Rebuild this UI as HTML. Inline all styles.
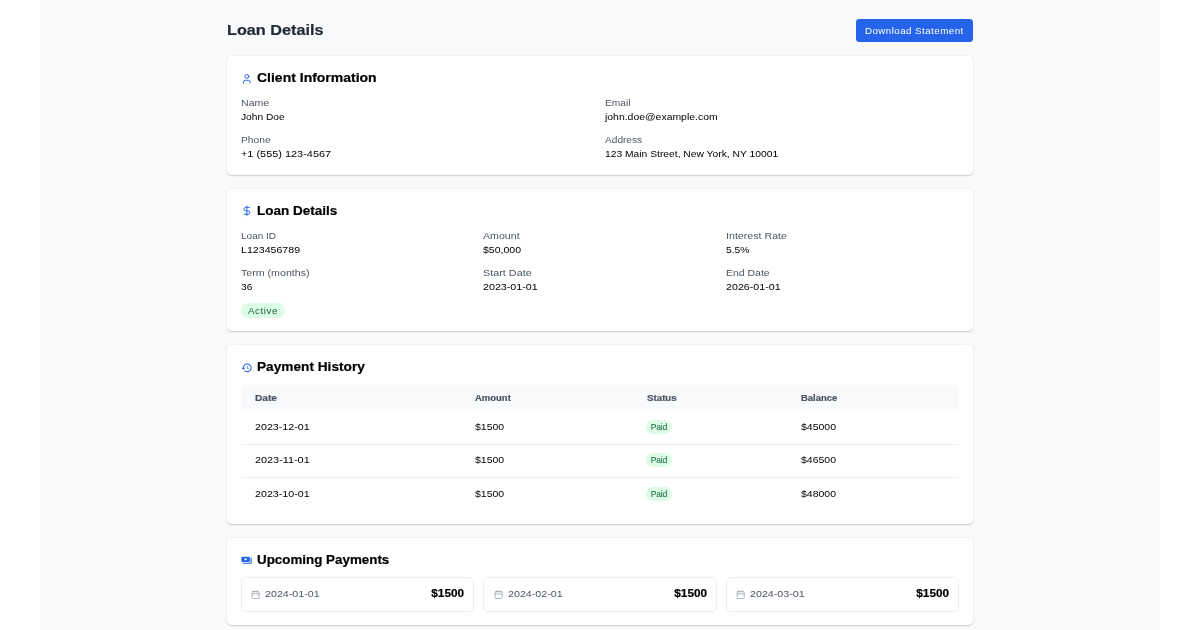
<!DOCTYPE html>
<html><head><meta charset="utf-8"><style>
*{margin:0;padding:0;box-sizing:border-box;}
html,body{width:1200px;height:630px;overflow:hidden;background:#fff;font-family:"Liberation Sans", sans-serif;color:#000;}
.cont{will-change:transform;}
.cont *{-webkit-text-stroke:0px currentColor;}
.h1,.ttl span,.th,.am{-webkit-text-stroke:0.2px currentColor;}
.outer{position:absolute;left:40px;top:0;width:1120px;height:630px;background:#f9fafb;}
.cont{position:absolute;left:227px;top:18.650px;width:746px;}
.hdr{position:relative;height:23.312px;}
.h1{position:absolute;left:0;top:2.331px;line-height:18.650px;font-weight:bold;color:#1f2937;white-space:nowrap;}
.btn{position:absolute;right:0;top:0;height:23.312px;line-height:23.312px;padding:0 9.325px;background:#2563eb;color:#fff;border-radius:3.497px;white-space:nowrap;}
.card{position:relative;background:#fff;border-radius:4.662px;box-shadow:0 0.7px 2.4px 0 rgba(0,0,0,.10),0 0.6px 1.2px -0.4px rgba(0,0,0,.10);padding:13.987px;margin-top:13.987px;}
.ttl{display:flex;align-items:center;height:16.318px;margin-bottom:9.325px;}
.ttl svg{margin-right:4.662px;flex:none;display:block;}
.ttl span{font-weight:bold;line-height:16.318px;white-space:nowrap;}
.g2{display:grid;grid-template-columns:1fr 1fr;gap:9.325px;}
.g3{display:grid;grid-template-columns:1fr 1fr 1fr;gap:9.325px;}
.lab{color:#4b5563;line-height:13.987px;white-space:nowrap;}
.val{line-height:13.987px;white-space:nowrap;}
.bdg{position:relative;height:13.987px;margin-top:9.325px;}
.active{display:block;position:absolute;left:0;top:-0.758px;height:15.502px;line-height:15.502px;padding:0 6.994px;background:#dcfce7;color:#166534;border-radius:999px;white-space:nowrap;}
.tbl{position:relative;}
.thr{position:relative;height:26.226px;background:#f9fafb;border-bottom:0.583px solid #f9fafb;}
.th{position:absolute;top:0.75px;line-height:25.643px;font-weight:bold;color:#4b5563;white-space:nowrap;}
.tr{position:relative;height:32.637px;}
.tr.b{border-top:1px solid #eceef1;height:33.220px;}
.td{position:absolute;bottom:0;line-height:32.637px;height:32.637px;white-space:nowrap;}
.paid{display:inline-block;vertical-align:middle;height:13.987px;line-height:calc(13.987px + 1.6px);margin-left:-1px;padding:0 4.662px;background:#dcfce7;color:#166534;border-radius:999px;position:relative;top:-0.583px;}
.box{border:1px solid #eceef1;border-radius:4.662px;height:calc(33.802px + 0.8px);padding:0 9.325px;display:flex;align-items:center;justify-content:space-between;}
.bl{display:flex;align-items:center;}
.bl svg{margin-right:4.662px;display:block;}
.dt{color:#4b5563;line-height:13.987px;white-space:nowrap;}
.am{font-weight:bold;line-height:13.987px;white-space:nowrap;margin-right:-0.4px;}
</style></head><body>
<div class="outer"></div>
<div class="cont">
 <div class="hdr">
  <div class="h1" style="font-size:14.407px;transform:scaleX(1.1276);transform-origin:left center;">Loan Details</div>
  <div class="btn" style="font-size:9.791px;letter-spacing:0.442px;">Download Statement</div>
 </div>
 <div class="card">
  <div class="ttl"><svg width="11.66" height="11.66" viewBox="0 0 24 24" fill="none" stroke="#2563eb" stroke-width="2" stroke-linecap="round" stroke-linejoin="round"><path d="M19 21v-2a4 4 0 0 0-4-4H9a4 4 0 0 0-4 4v2"/><circle cx="12" cy="7" r="4"/></svg><span style="font-size:12.006px;transform:scaleX(1.1656);transform-origin:left center;">Client Information</span></div>
  <div class="g2">
   <div><div class="lab" style="font-size:9.791px;transform:scaleX(1.0816);transform-origin:left center;">Name</div><div class="val" style="font-size:9.791px;transform:scaleX(1.0397);transform-origin:left center;">John Doe</div></div>
   <div><div class="lab" style="font-size:9.791px;transform:scaleX(1.0397);transform-origin:left center;">Email</div><div class="val" style="font-size:9.791px;transform:scaleX(1.0665);transform-origin:left center;">john.doe@example.com</div></div>
   <div><div class="lab" style="font-size:9.791px;transform:scaleX(1.0458);transform-origin:left center;">Phone</div><div class="val" style="font-size:9.791px;transform:scaleX(1.1156);transform-origin:left center;">+1 (555) 123-4567</div></div>
   <div><div class="lab" style="font-size:9.791px;transform:scaleX(1.0345);transform-origin:left center;">Address</div><div class="val" style="font-size:9.791px;transform:scaleX(1.0519);transform-origin:left center;">123 Main Street, New York, NY 10001</div></div>
  </div>
 </div>
 <div class="card">
  <div class="ttl"><svg width="11.66" height="11.66" viewBox="0 0 24 24" fill="none" stroke="#2563eb" stroke-width="2" stroke-linecap="round" stroke-linejoin="round"><line x1="12" y1="2" x2="12" y2="22"/><path d="M17 5H9.5a3.5 3.5 0 0 0 0 7h5a3.5 3.5 0 0 1 0 7H6"/></svg><span style="font-size:12.006px;transform:scaleX(1.1240);transform-origin:left center;">Loan Details</span></div>
  <div class="g3">
   <div><div class="lab" style="font-size:9.791px;transform:scaleX(1.0246);transform-origin:left center;">Loan ID</div><div class="val" style="font-size:9.791px;transform:scaleX(1.0858);transform-origin:left center;">L123456789</div></div>
   <div><div class="lab" style="font-size:9.791px;transform:scaleX(1.0869);transform-origin:left center;">Amount</div><div class="val" style="font-size:9.791px;transform:scaleX(1.0743);transform-origin:left center;">$50,000</div></div>
   <div><div class="lab" style="font-size:9.791px;transform:scaleX(1.0884);transform-origin:left center;">Interest Rate</div><div class="val" style="font-size:9.791px;transform:scaleX(1.0537);transform-origin:left center;">5.5%</div></div>
   <div><div class="lab" style="font-size:9.791px;transform:scaleX(1.0869);transform-origin:left center;">Term (months)</div><div class="val" style="font-size:9.791px;transform:scaleX(1.0424);transform-origin:left center;">36</div></div>
   <div><div class="lab" style="font-size:9.791px;transform:scaleX(1.1065);transform-origin:left center;">Start Date</div><div class="val" style="font-size:9.791px;transform:scaleX(1.0928);transform-origin:left center;">2023-01-01</div></div>
   <div><div class="lab" style="font-size:9.791px;transform:scaleX(1.0705);transform-origin:left center;">End Date</div><div class="val" style="font-size:9.791px;transform:scaleX(1.0928);transform-origin:left center;">2026-01-01</div></div>
  </div>
  <div class="bdg"><span class="active" style="font-size:9.791px;letter-spacing:0.576px;">Active</span></div>
 </div>
 <div class="card">
  <div class="ttl"><svg width="11.66" height="11.66" viewBox="0 0 24 24" fill="#2563eb" style="position:relative;top:0.6px"><path d="M13 3a9 9 0 0 0-9 9H1l3.89 3.89.07.14L9 12H6c0-3.87 3.13-7 7-7s7 3.13 7 7-3.13 7-7 7c-1.93 0-3.68-.79-4.94-2.06l-1.42 1.42A8.954 8.954 0 0 0 13 21a9 9 0 0 0 0-18zm-1 5v5l4.28 2.54.72-1.21-3.5-2.08V8H12z"/></svg><span style="font-size:12.006px;transform:scaleX(1.1386);transform-origin:left center;">Payment History</span></div>
  <div class="tbl">
   <div class="thr"><div class="th" style="left:14.000px;font-size:8.649px;transform:scaleX(1.1717);transform-origin:left center;">Date</div><div class="th" style="left:234.000px;font-size:8.649px;transform:scaleX(1.0998);transform-origin:left center;">Amount</div><div class="th" style="left:406.000px;font-size:8.649px;transform:scaleX(1.1270);transform-origin:left center;">Status</div><div class="th" style="left:560.000px;font-size:8.649px;transform:scaleX(1.0997);transform-origin:left center;">Balance</div></div><div class="tr"><div class="td" style="left:14.000px;font-size:9.791px;transform:scaleX(1.0928);transform-origin:left center;">2023-12-01</div><div class="td" style="left:234.000px;font-size:9.791px;transform:scaleX(1.0699);transform-origin:left center;">$1500</div><div class="td" style="left:406.000px;"><span class="paid" style="font-size:8.567px;letter-spacing:-0.187px;">Paid</span></div><div class="td" style="left:560.000px;font-size:9.791px;transform:scaleX(1.0730);transform-origin:left center;">$45000</div></div><div class="tr b"><div class="td" style="left:14.000px;font-size:9.791px;transform:scaleX(1.1090);transform-origin:left center;">2023-11-01</div><div class="td" style="left:234.000px;font-size:9.791px;transform:scaleX(1.0699);transform-origin:left center;">$1500</div><div class="td" style="left:406.000px;"><span class="paid" style="font-size:8.567px;letter-spacing:-0.187px;">Paid</span></div><div class="td" style="left:560.000px;font-size:9.791px;transform:scaleX(1.0730);transform-origin:left center;">$46500</div></div><div class="tr b"><div class="td" style="left:14.000px;font-size:9.791px;transform:scaleX(1.0928);transform-origin:left center;">2023-10-01</div><div class="td" style="left:234.000px;font-size:9.791px;transform:scaleX(1.0699);transform-origin:left center;">$1500</div><div class="td" style="left:406.000px;"><span class="paid" style="font-size:8.567px;letter-spacing:-0.187px;">Paid</span></div><div class="td" style="left:560.000px;font-size:9.791px;transform:scaleX(1.0730);transform-origin:left center;">$48000</div></div>
  </div>
 </div>
 <div class="card">
  <div class="ttl"><svg width="11.66" height="11.66" viewBox="0 0 20 20" style="position:relative;top:0.9px"><rect x="0.6" y="2.8" width="14.6" height="9" rx="1.4" fill="#2563eb"/><ellipse cx="7.9" cy="7.3" rx="2" ry="1.7" fill="#fff"/><path d="M3.4 14.1H17.4V5.2" fill="none" stroke="#2563eb" stroke-width="1.9" stroke-linecap="round" stroke-linejoin="round"/></svg><span style="font-size:12.006px;transform:scaleX(1.1146);transform-origin:left center;">Upcoming Payments</span></div>
  <div class="g3" style="margin-top:-0.8px"><div class="box"><div class="bl"><svg width="9.33" height="9.33" viewBox="0 0 24 24" fill="none" stroke="#9ca3af" stroke-width="2" stroke-linecap="round" stroke-linejoin="round"><rect x="3" y="4" width="18" height="18" rx="2"/><line x1="16" y1="2" x2="16" y2="6"/><line x1="8" y1="2" x2="8" y2="6"/><line x1="3" y1="10" x2="21" y2="10"/></svg><span class="dt" style="font-size:9.791px;transform:scaleX(1.0928);transform-origin:left center;">2024-01-01</span></div><span class="am" style="font-size:10.444px;transform:scaleX(1.1266);transform-origin:right center;">$1500</span></div><div class="box"><div class="bl"><svg width="9.33" height="9.33" viewBox="0 0 24 24" fill="none" stroke="#9ca3af" stroke-width="2" stroke-linecap="round" stroke-linejoin="round"><rect x="3" y="4" width="18" height="18" rx="2"/><line x1="16" y1="2" x2="16" y2="6"/><line x1="8" y1="2" x2="8" y2="6"/><line x1="3" y1="10" x2="21" y2="10"/></svg><span class="dt" style="font-size:9.791px;transform:scaleX(1.0928);transform-origin:left center;">2024-02-01</span></div><span class="am" style="font-size:10.444px;transform:scaleX(1.1266);transform-origin:right center;">$1500</span></div><div class="box"><div class="bl"><svg width="9.33" height="9.33" viewBox="0 0 24 24" fill="none" stroke="#9ca3af" stroke-width="2" stroke-linecap="round" stroke-linejoin="round"><rect x="3" y="4" width="18" height="18" rx="2"/><line x1="16" y1="2" x2="16" y2="6"/><line x1="8" y1="2" x2="8" y2="6"/><line x1="3" y1="10" x2="21" y2="10"/></svg><span class="dt" style="font-size:9.791px;transform:scaleX(1.0928);transform-origin:left center;">2024-03-01</span></div><span class="am" style="font-size:10.444px;transform:scaleX(1.1266);transform-origin:right center;">$1500</span></div>
  </div>
 </div>
</div>
</body></html>
